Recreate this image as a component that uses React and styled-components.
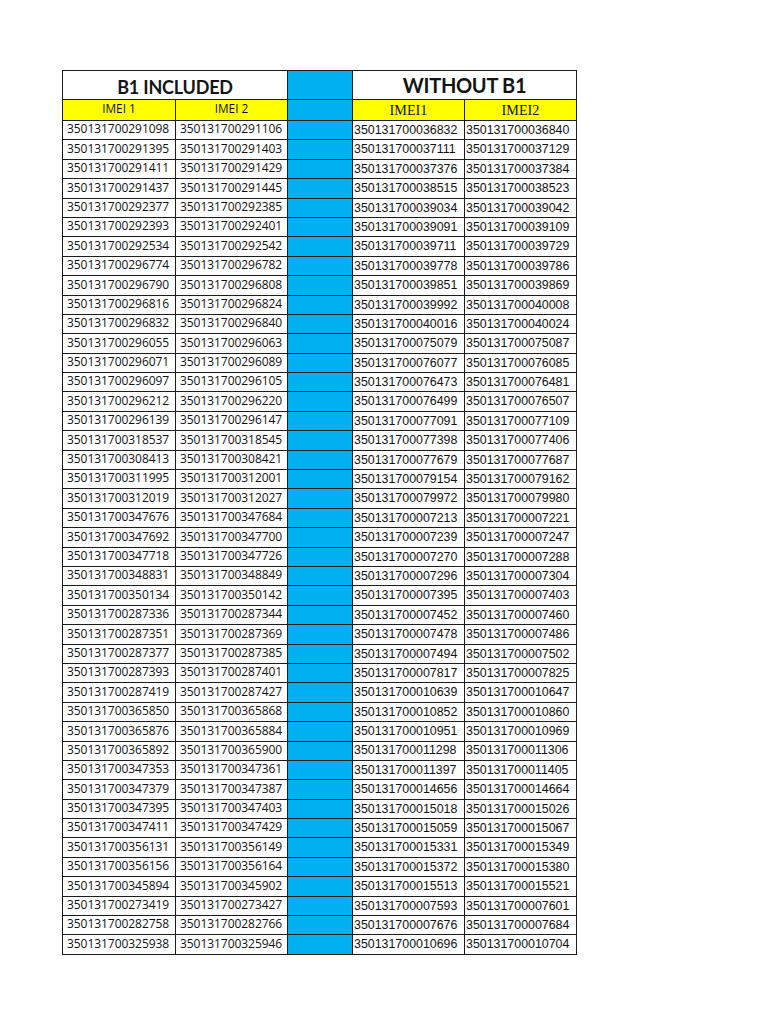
import React from "react";
import styled, { createGlobalStyle } from "styled-components";

const GlobalStyle = createGlobalStyle`
  html, body { margin: 0; padding: 0; background: #ffffff; }
  body { font-family: "Liberation Sans", Arial, sans-serif; }
`;

const PREFIX = "350131700";

const LEFT = [
  ["291098", "291106"], ["291395", "291403"], ["291411", "291429"], ["291437", "291445"],
  ["292377", "292385"], ["292393", "292401"], ["292534", "292542"], ["296774", "296782"],
  ["296790", "296808"], ["296816", "296824"], ["296832", "296840"], ["296055", "296063"],
  ["296071", "296089"], ["296097", "296105"], ["296212", "296220"], ["296139", "296147"],
  ["318537", "318545"], ["308413", "308421"], ["311995", "312001"], ["312019", "312027"],
  ["347676", "347684"], ["347692", "347700"], ["347718", "347726"], ["348831", "348849"],
  ["350134", "350142"], ["287336", "287344"], ["287351", "287369"], ["287377", "287385"],
  ["287393", "287401"], ["287419", "287427"], ["365850", "365868"], ["365876", "365884"],
  ["365892", "365900"], ["347353", "347361"], ["347379", "347387"], ["347395", "347403"],
  ["347411", "347429"], ["356131", "356149"], ["356156", "356164"], ["345894", "345902"],
  ["273419", "273427"], ["282758", "282766"], ["325938", "325946"],
];

const RIGHT = [
  ["036832", "036840"], ["037111", "037129"], ["037376", "037384"], ["038515", "038523"],
  ["039034", "039042"], ["039091", "039109"], ["039711", "039729"], ["039778", "039786"],
  ["039851", "039869"], ["039992", "040008"], ["040016", "040024"], ["075079", "075087"],
  ["076077", "076085"], ["076473", "076481"], ["076499", "076507"], ["077091", "077109"],
  ["077398", "077406"], ["077679", "077687"], ["079154", "079162"], ["079972", "079980"],
  ["007213", "007221"], ["007239", "007247"], ["007270", "007288"], ["007296", "007304"],
  ["007395", "007403"], ["007452", "007460"], ["007478", "007486"], ["007494", "007502"],
  ["007817", "007825"], ["010639", "010647"], ["010852", "010860"], ["010951", "010969"],
  ["011298", "011306"], ["011397", "011405"], ["014656", "014664"], ["015018", "015026"],
  ["015059", "015067"], ["015331", "015349"], ["015372", "015380"], ["015513", "015521"],
  ["007593", "007601"], ["007676", "007684"], ["010696", "010704"],
];

const Page = styled.div`
  padding: 70px 0 0 62px;
`;

const Sheet = styled.table`
  border-collapse: collapse;
  table-layout: fixed;
  width: 515px;
  border: 1px solid #3a3a3a;
  color: #111111;
`;

const Col = styled.col`
  width: ${(p) => p.$w}px;
`;

const TitleRow = styled.tr`
  height: 29px;
`;

const LabelRow = styled.tr`
  height: 21px;
`;

const DataRow = styled.tr`
  height: 19.4px;
`;

const baseCell = `
  border: 1px solid #1c1c1c;
  padding: 0;
  white-space: nowrap;
  overflow: hidden;
`;

const TitleCell = styled.td`
  ${baseCell}
  background: #ffffff;
  text-align: center;
  font-family: Lato, "Open Sans", sans-serif;
  font-weight: 700;
  color: #141414;
  font-size: ${(p) => (p.$large ? "20px" : "18px")};
  letter-spacing: ${(p) => (p.$large ? "-0.3px" : "-0.2px")};
  vertical-align: ${(p) => (p.$large ? "middle" : "bottom")};
  padding-bottom: ${(p) => (p.$large ? "1px" : "3px")};
  line-height: 1;
`;

const LabelCell = styled.td`
  ${baseCell}
  background: #ffff00;
  text-align: center;
  vertical-align: bottom;
  font-family: ${(p) =>
    p.$serif ? '"Liberation Serif", "Times New Roman", serif' : '"Open Sans", Lato, sans-serif'};
  font-size: ${(p) => (p.$serif ? "14.2px" : "11.8px")};
  line-height: 1;
  padding-bottom: ${(p) => (p.$serif ? "3px" : "5px")};
`;

const DataCell = styled.td`
  ${baseCell}
  background: #ffffff;
  vertical-align: bottom;
  line-height: 1;
  font-family: ${(p) =>
    p.$arial ? '"Liberation Sans", Arial, sans-serif' : '"Open Sans", Lato, sans-serif'};
  font-size: ${(p) => (p.$arial ? "12.4px" : "12px")};
  letter-spacing: ${(p) => (p.$arial ? "0" : "-0.05px")};
  padding-left: ${(p) => (p.$arial ? "1px" : "4px")};
  padding-bottom: ${(p) => (p.$arial ? "3px" : "4px")};
`;

const Spacer = styled.td`
  border: 1px solid #1c1c1c;
  padding: 0;
  background: #00b0f0;
`;

export default function App() {
  return (
    <>
      <GlobalStyle />
      <Page>
        <Sheet>
          <colgroup>
            <Col $w={113} />
            <Col $w={112} />
            <Col $w={65} />
            <Col $w={112} />
            <Col $w={112} />
          </colgroup>
          <tbody>
            <TitleRow>
              <TitleCell colSpan={2}>B1 INCLUDED</TitleCell>
              <Spacer />
              <TitleCell colSpan={2} $large>
                WITHOUT B1
              </TitleCell>
            </TitleRow>
            <LabelRow>
              <LabelCell>IMEI 1</LabelCell>
              <LabelCell>IMEI 2</LabelCell>
              <Spacer />
              <LabelCell $serif>IMEI1</LabelCell>
              <LabelCell $serif>IMEI2</LabelCell>
            </LabelRow>
            {LEFT.map((l, i) => (
              <DataRow key={i}>
                <DataCell>{PREFIX + l[0]}</DataCell>
                <DataCell>{PREFIX + l[1]}</DataCell>
                <Spacer />
                <DataCell $arial>{PREFIX + RIGHT[i][0]}</DataCell>
                <DataCell $arial>{PREFIX + RIGHT[i][1]}</DataCell>
              </DataRow>
            ))}
          </tbody>
        </Sheet>
      </Page>
    </>
  );
}
